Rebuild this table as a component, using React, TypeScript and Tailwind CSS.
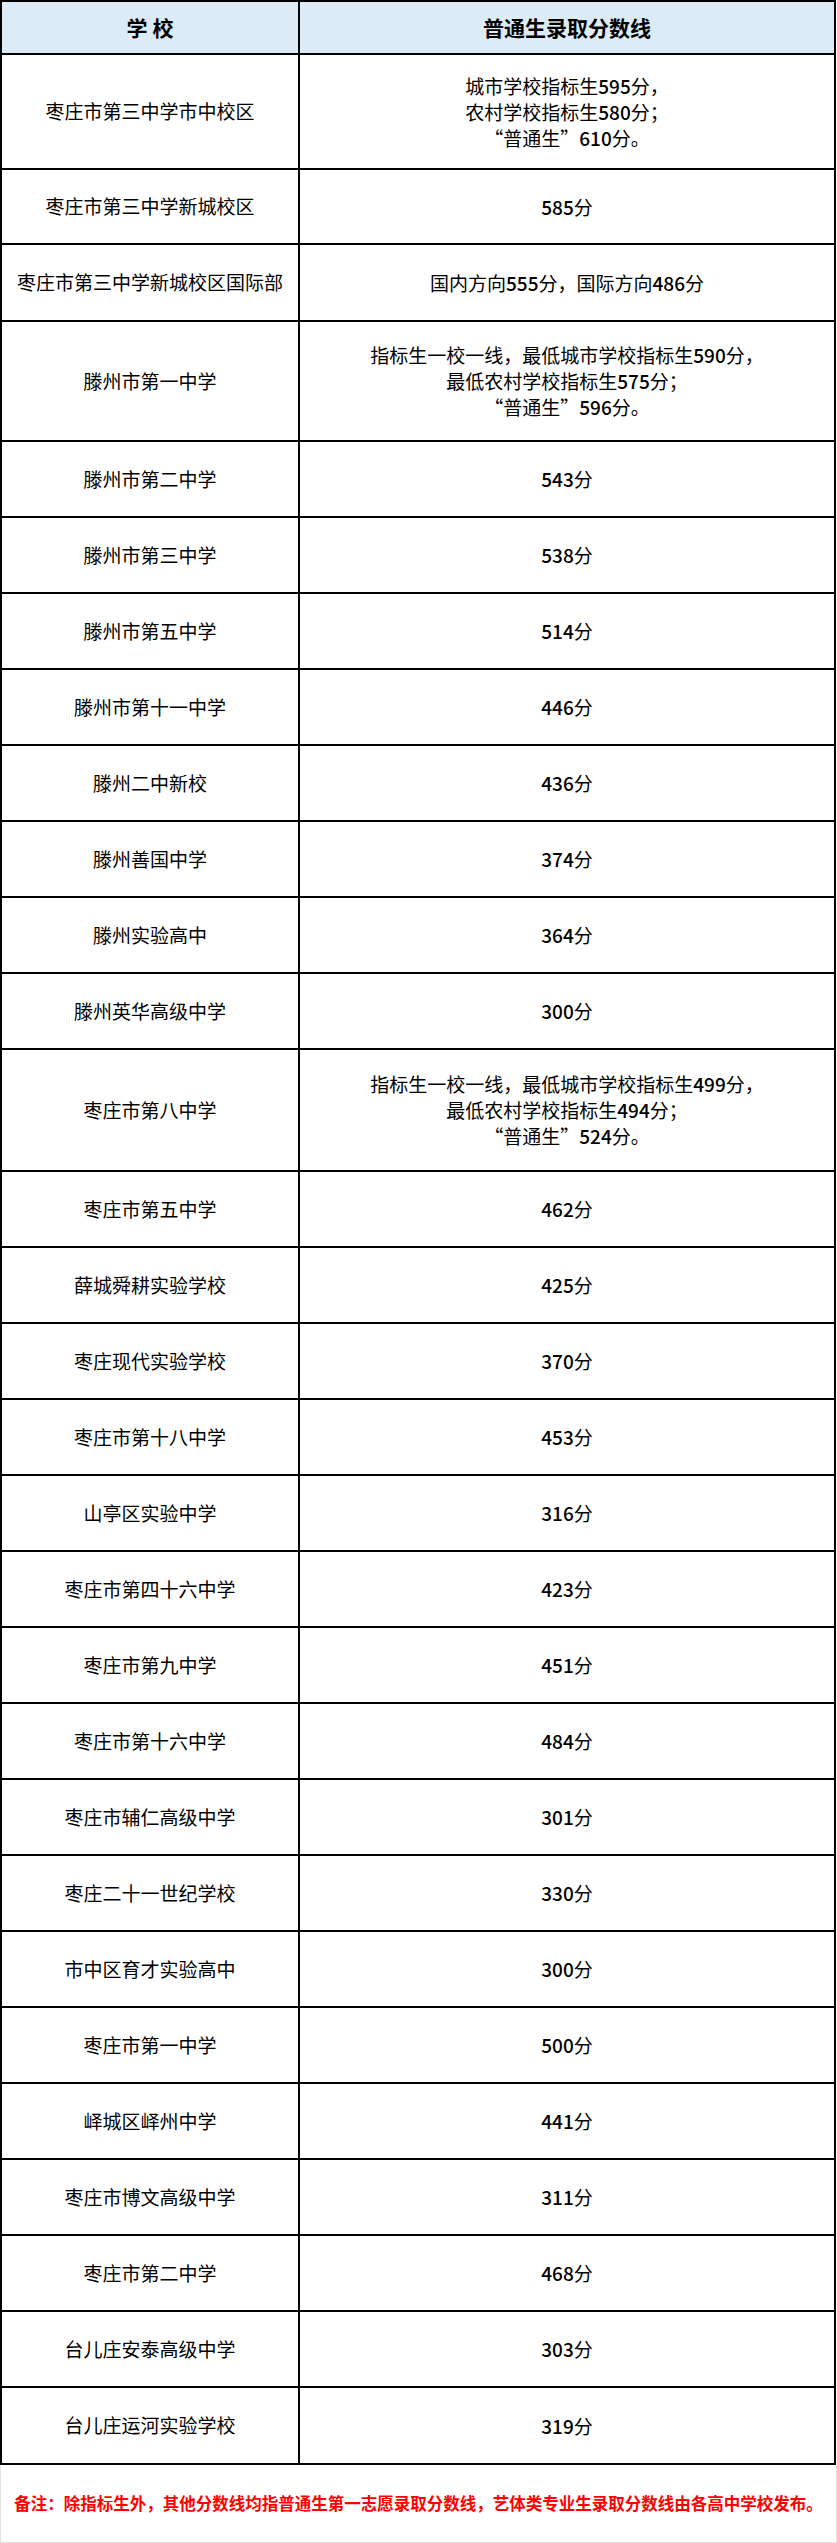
import React from 'react';

type Row = {
  school: string;
  score: string[];
  h: string;
};

// h 包含底部边框
const rows: Row[] = [
  { school: '枣庄市第三中学市中校区', score: ['城市学校指标生595分，', '农村学校指标生580分；', '“普通生”610分。'], h: 'h-[115px]' },
  { school: '枣庄市第三中学新城校区', score: ['585分'], h: 'h-[75px]' },
  { school: '枣庄市第三中学新城校区国际部', score: ['国内方向555分，国际方向486分'], h: 'h-[77px]' },
  { school: '滕州市第一中学', score: ['指标生一校一线，最低城市学校指标生590分，', '最低农村学校指标生575分；', '“普通生”596分。'], h: 'h-[120px]' },
  { school: '滕州市第二中学', score: ['543分'], h: 'h-[76px]' },
  { school: '滕州市第三中学', score: ['538分'], h: 'h-[76px]' },
  { school: '滕州市第五中学', score: ['514分'], h: 'h-[76px]' },
  { school: '滕州市第十一中学', score: ['446分'], h: 'h-[76px]' },
  { school: '滕州二中新校', score: ['436分'], h: 'h-[76px]' },
  { school: '滕州善国中学', score: ['374分'], h: 'h-[76px]' },
  { school: '滕州实验高中', score: ['364分'], h: 'h-[76px]' },
  { school: '滕州英华高级中学', score: ['300分'], h: 'h-[76px]' },
  { school: '枣庄市第八中学', score: ['指标生一校一线，最低城市学校指标生499分，', '最低农村学校指标生494分；', '“普通生”524分。'], h: 'h-[122px]' },
  { school: '枣庄市第五中学', score: ['462分'], h: 'h-[76px]' },
  { school: '薛城舜耕实验学校', score: ['425分'], h: 'h-[76px]' },
  { school: '枣庄现代实验学校', score: ['370分'], h: 'h-[76px]' },
  { school: '枣庄市第十八中学', score: ['453分'], h: 'h-[76px]' },
  { school: '山亭区实验中学', score: ['316分'], h: 'h-[76px]' },
  { school: '枣庄市第四十六中学', score: ['423分'], h: 'h-[76px]' },
  { school: '枣庄市第九中学', score: ['451分'], h: 'h-[76px]' },
  { school: '枣庄市第十六中学', score: ['484分'], h: 'h-[76px]' },
  { school: '枣庄市辅仁高级中学', score: ['301分'], h: 'h-[76px]' },
  { school: '枣庄二十一世纪学校', score: ['330分'], h: 'h-[76px]' },
  { school: '市中区育才实验高中', score: ['300分'], h: 'h-[76px]' },
  { school: '枣庄市第一中学', score: ['500分'], h: 'h-[76px]' },
  { school: '峄城区峄州中学', score: ['441分'], h: 'h-[76px]' },
  { school: '枣庄市博文高级中学', score: ['311分'], h: 'h-[76px]' },
  { school: '枣庄市第二中学', score: ['468分'], h: 'h-[76px]' },
  { school: '台儿庄安泰高级中学', score: ['303分'], h: 'h-[76px]' },
  { school: '台儿庄运河实验学校', score: ['319分'], h: 'h-[77px]' }
];

// 数字稍粗一点
const withDigits = (text: string): React.ReactNode[] =>
  text.split(/(\d+)/).map((part, i) =>
    /^\d+$/.test(part) ? (
      <span key={i} className="font-medium">
        {part}
      </span>
    ) : (
      <React.Fragment key={i}>{part}</React.Fragment>
    )
  );

const App = (): React.ReactElement => {
  return (
    <div
      className="w-[837px] bg-white text-black"
      style={{ fontFamily: '"Noto Sans CJK SC", "Noto Sans", sans-serif' }}
    >
      <div className="w-[836px] border-x-2 border-t-2 border-black">
        {/* 表头 */}
        <div className="grid h-[53px] grid-cols-[298px_1fr] border-b-2 border-black bg-[#DDEBF7] text-[21px] font-bold">
          <div className="flex items-center justify-center border-r-2 border-black">
            学 校
          </div>
          <div className="flex items-center justify-center">普通生录取分数线</div>
        </div>

        {rows.map(row => (
          <div
            key={row.school}
            className={`grid grid-cols-[298px_1fr] border-b-2 border-black text-[19px] ${row.h}`}
          >
            <div className="flex items-center justify-center border-r-2 border-black">
              {row.school}
            </div>
            <div className="flex flex-col items-center justify-center leading-[26px]">
              {row.score.map(line => (
                <div key={line}>{withDigits(line)}</div>
              ))}
            </div>
          </div>
        ))}
      </div>

      {/* 备注 */}
      <div className="flex h-[78px] items-center justify-center border-x border-b border-[#e2e2e2] text-[16.5px] font-bold text-[#ff0000]">
        备注：除指标生外，其他分数线均指普通生第一志愿录取分数线，艺体类专业生录取分数线由各高中学校发布。
      </div>
    </div>
  );
};

export default App;
